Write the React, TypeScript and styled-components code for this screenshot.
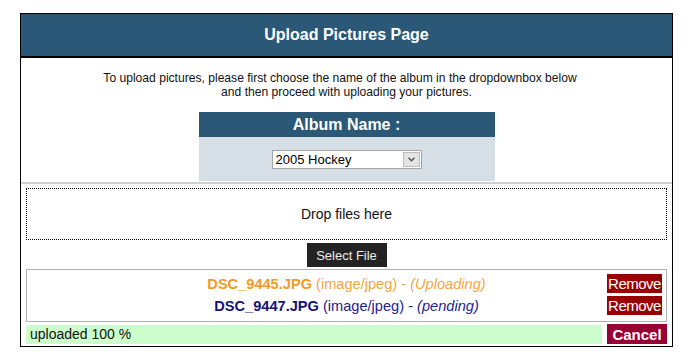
import styled, { createGlobalStyle } from 'styled-components';

const GlobalStyle = createGlobalStyle`
  body {
    margin: 0;
    padding: 13px 0 0 20px;
    background: #ffffff;
    font-family: 'Liberation Sans', Arial, sans-serif;
  }
`;

const Page = styled.div`
  width: 651px;
  border: 1px solid #000;
  background: #fff;
  padding-bottom: 2px;
`;

const Title = styled.div`
  height: 42px;
  background: #2b5877;
  border-bottom: 2px solid #000;
  display: flex;
  align-items: center;
  justify-content: center;
  color: #fff;
  font-weight: 700;
  font-size: 16px;
`;

const Intro = styled.p`
  margin: 13px 0 0;
  text-align: center;
  font-size: 12.1px;
  line-height: 14px;
  color: #111;
`;

const IntroLine = styled.span<{ $trail?: number }>`
  display: block;
  padding-right: ${(p) => p.$trail ?? 0}px;
`;

const AlbumTable = styled.div`
  width: 296px;
  margin: 13px auto 0;
`;

const AlbumHead = styled.div`
  height: 25px;
  background: #2b5877;
  color: #fff;
  font-weight: 700;
  font-size: 16px;
  display: flex;
  align-items: center;
  justify-content: center;
`;

const AlbumBody = styled.div`
  height: 44px;
  background: #d6dee6;
  display: flex;
  align-items: center;
  justify-content: center;
`;

const SelectBox = styled.div`
  width: 148px;
  height: 17px;
  border: 1px solid #a5a5a5;
  background: #fff;
  display: flex;
  align-items: stretch;
`;

const NativeSelect = styled.select`
  flex: 1;
  appearance: none;
  border: none;
  outline: none;
  background: transparent;
  padding: 0 0 0 3px;
  font-family: 'Liberation Sans', Arial, sans-serif;
  font-size: 13px;
  color: #000;
`;

const Arrow = styled.span`
  width: 15px;
  margin: 1px;
  border: 1px solid #bcbcbc;
  background: #e4e4e4;
  display: flex;
  align-items: center;
  justify-content: center;
`;

const UploadArea = styled.div`
  margin-top: 1px;
  border-top: 2px solid #d0d0d0;
  padding: 4px 5px 0;
  display: flex;
  flex-direction: column;
  align-items: center;
`;

const DropZone = styled.div`
  align-self: stretch;
  height: 50px;
  border: 1px dotted #000;
  display: flex;
  align-items: center;
  justify-content: center;
  font-size: 14px;
  color: #111;
`;

const SelectButton = styled.button`
  margin-top: 3px;
  width: 80px;
  height: 24px;
  border: none;
  background: #232323;
  color: #eee;
  font-family: 'Liberation Sans', Arial, sans-serif;
  font-size: 13px;
  padding: 0;
`;

const FileList = styled.div`
  align-self: stretch;
  margin-top: 2px;
  border: 1px solid #b0b0b0;
  padding: 4px 4px 6px;
  display: flex;
  flex-direction: column;
  gap: 3px;
`;

const FileRow = styled.div`
  display: flex;
  align-items: center;
  height: 19px;
`;

const FileText = styled.div<{ $tone: 'active' | 'waiting' }>`
  flex: 1;
  text-align: center;
  font-size: 14.6px;
  padding-left: 55px;
  color: ${(p) => (p.$tone === 'active' ? '#f3a646' : '#23238a')};

  b {
    color: ${(p) => (p.$tone === 'active' ? '#f29a26' : '#141478')};
  }
`;

const RemoveButton = styled.button`
  width: 55px;
  height: 19px;
  border: none;
  padding: 0;
  background: #990000;
  color: #fff;
  font-family: 'Liberation Sans', Arial, sans-serif;
  font-size: 15px;
  letter-spacing: -0.5px;
`;

const StatusRow = styled.div`
  align-self: stretch;
  margin-top: 2px;
  display: flex;
  align-items: center;
  gap: 5px;
`;

const Progress = styled.div`
  flex: 1;
  height: 19px;
  background: #ccffcc;
  display: flex;
  align-items: center;
  padding-left: 4px;
  font-size: 14px;
  color: #111;
`;

const CancelButton = styled.button`
  width: 60px;
  height: 20px;
  border: none;
  padding: 0;
  background: #990033;
  color: #fff;
  font-family: 'Liberation Sans', Arial, sans-serif;
  font-weight: 700;
  font-size: 15px;
`;

const files = [
  { name: 'DSC_9445.JPG', type: 'image/jpeg', state: 'Uploading', tone: 'active' as const },
  { name: 'DSC_9447.JPG', type: 'image/jpeg', state: 'pending', tone: 'waiting' as const },
];

function App() {
  return (
    <>
      <GlobalStyle />
      <Page>
        <Title>Upload Pictures Page</Title>
        <Intro>
          <IntroLine $trail={13}>
            To upload pictures, please first choose the name of the album in the dropdownbox below
          </IntroLine>
          <IntroLine>and then proceed with uploading your pictures.</IntroLine>
        </Intro>
        <AlbumTable>
          <AlbumHead>Album Name :</AlbumHead>
          <AlbumBody>
            <SelectBox>
              <NativeSelect defaultValue="2005 Hockey">
                <option>2005 Hockey</option>
              </NativeSelect>
              <Arrow>
                <svg width="7" height="5" viewBox="0 0 7 5">
                  <path d="M0.5 0.8 L3.5 3.8 L6.5 0.8" fill="none" stroke="#555" strokeWidth="1.4" />
                </svg>
              </Arrow>
            </SelectBox>
          </AlbumBody>
        </AlbumTable>
        <UploadArea>
          <DropZone>Drop files here</DropZone>
          <SelectButton>Select File</SelectButton>
          <FileList>
            {files.map((f) => (
              <FileRow key={f.name}>
                <FileText $tone={f.tone}>
                  <b>{f.name}</b> ({f.type}) - <i>({f.state})</i>
                </FileText>
                <RemoveButton>Remove</RemoveButton>
              </FileRow>
            ))}
          </FileList>
          <StatusRow>
            <Progress>uploaded 100 %</Progress>
            <CancelButton>Cancel</CancelButton>
          </StatusRow>
        </UploadArea>
      </Page>
    </>
  );
}

export default App;
